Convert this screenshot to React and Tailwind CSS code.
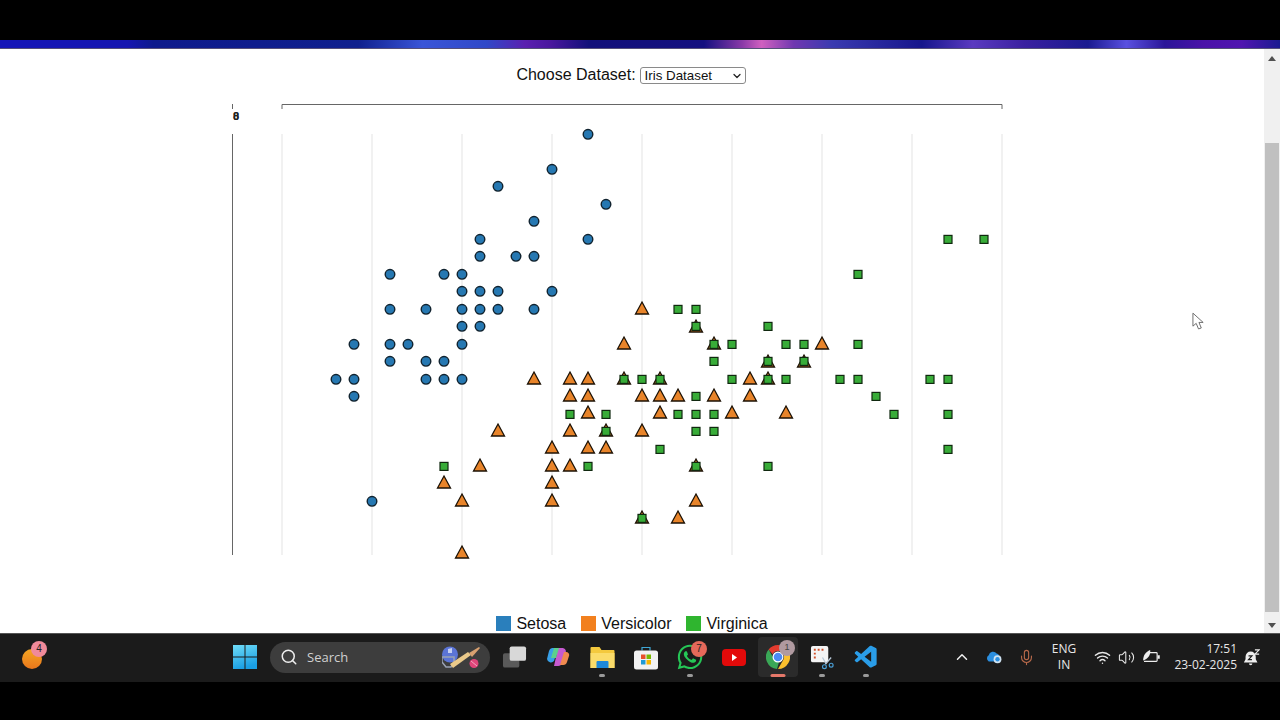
import React from 'react';
import { Search, ChevronUp, ChevronDown, Mic, Wifi, Volume2 } from 'lucide-react';
import { FaWhatsapp } from 'react-icons/fa';
import { VscVscode } from 'react-icons/vsc';

const gridX = [282, 372, 462, 552, 642, 732, 822, 912, 1002];

const setosa = [
  [588, 134], [552, 169], [498, 186], [606, 204], [534, 221], [480, 239], [588, 239], [480, 256], [516, 256], [534, 256],
  [390, 274], [444, 274], [462, 274], [462, 291], [480, 291], [498, 291], [552, 291], [390, 309], [426, 309], [462, 309],
  [480, 309], [498, 309], [534, 309], [462, 326], [480, 326], [354, 344], [390, 344], [408, 344], [462, 344], [390, 361],
  [426, 361], [444, 361], [336, 379], [354, 379], [426, 379], [444, 379], [462, 379], [354, 396], [372, 501],
];

const versicolor = [
  [642, 308], [696, 326], [624, 343], [714, 343], [822, 343], [768, 361], [804, 361], [534, 378], [570, 378], [588, 378],
  [624, 378], [660, 378], [750, 378], [768, 378], [570, 395], [588, 395], [642, 395], [660, 395], [678, 395], [714, 395],
  [750, 395], [588, 412], [660, 412], [732, 412], [786, 412], [498, 430], [570, 430], [606, 430], [642, 430], [552, 447],
  [588, 447], [606, 447], [480, 465], [552, 465], [570, 465], [696, 465], [444, 482], [552, 482], [462, 500], [552, 500],
  [696, 500], [642, 517], [678, 517], [462, 552],
];

const virginica = [
  [948, 239], [984, 239], [858, 274], [678, 309], [696, 309], [696, 326], [768, 326], [714, 344], [732, 344], [786, 344],
  [804, 344], [858, 344], [714, 361], [768, 361], [804, 361], [624, 379], [642, 379], [660, 379], [732, 379], [768, 379],
  [786, 379], [840, 379], [858, 379], [930, 379], [948, 379], [696, 396], [876, 396], [570, 414], [606, 414], [678, 414],
  [696, 414], [714, 414], [894, 414], [948, 414], [606, 431], [696, 431], [714, 431], [660, 449], [948, 449], [444, 466],
  [588, 466], [696, 466], [768, 466], [642, 518],
];

function Chart() {
  return (
    <svg viewBox="0 100 1264 465" className="block w-[1264px] h-[465px] mt-[16px] shrink-0">
      {gridX.map((x) => (
        <line key={x} x1={x} x2={x} y1="134" y2="555" stroke="#ececec" strokeWidth="1.5" />
      ))}
      <path d="M282 109V104.500H1002V109" fill="none" stroke="#666" />
      <path d="M232.500 104V109M232.500 134V555" fill="none" stroke="#666" />
      <text x="233" y="120" fontSize="11" fontWeight="700" fill="#222" fontFamily="Liberation Sans">0</text>
      <text x="233" y="120" fontSize="11" fontWeight="700" fill="#222" fontFamily="Liberation Sans">8</text>
      {setosa.map(([x, y]) => (
        <circle key={`${x}-${y}`} cx={x} cy={y + 0.3} r="4.800" fill="#2678b2" stroke="#10222e" strokeWidth="1.400" />
      ))}
      {versicolor.map(([x, y]) => (
        <polygon key={`${x}-${y}`} points={`${x},${y - 6} ${x + 6.5},${y + 6} ${x - 6.5},${y + 6}`} fill="#e8842a" stroke="#1c1206" strokeWidth="1.300" />
      ))}
      {virginica.map(([x, y]) => (
        <rect key={`${x}-${y}`} x={x - 4} y={y - 3.6} width="8" height="8" fill="#38ac38" stroke="#10280f" strokeWidth="1.200" />
      ))}
    </svg>
  );
}

function LegendItem({ color, label }) {
  return (
    <div className="flex items-center gap-[5px]">
      <span className={`w-[15px] h-[15px] mb-[2px] ${color}`} />
      <span className="text-[16px] leading-[18px] text-[#111]">{label}</span>
    </div>
  );
}

function Scrollbar() {
  return (
    <div className="w-4 shrink-0 bg-[#f0f0f0] flex flex-col items-center">
      <div className="h-[16px] mt-[1px] flex items-center justify-center">
        <span className="w-0 h-0 border-x-[4px] border-x-transparent border-b-[5px] border-b-[#505050]" />
      </div>
      <div className="w-[14px] h-[469px] mt-[77px] bg-[#c0c0c0]" />
      <div className="h-[16px] mt-[5px] flex items-center justify-center">
        <span className="w-0 h-0 border-x-[4px] border-x-transparent border-t-[5px] border-t-[#505050]" />
      </div>
    </div>
  );
}

function Badge({ n, className }) {
  return (
    <span className={`absolute flex items-center justify-center rounded-full text-[10px] leading-none text-[#222] ${className}`}>{n}</span>
  );
}

function TaskIcon({ children, dot }) {
  return (
    <div className="relative w-[44px] h-[44px] flex items-center justify-center">
      {children}
      {dot && <span className="absolute left-1/2 -translate-x-1/2 top-[39px] w-[6px] h-[3px] rounded-full bg-[#9a9a9a]" />}
    </div>
  );
}

function Taskbar() {
  return (
    <div className="h-[49px] pb-[2px] bg-[#1b1b1b] border-t border-[#555] flex items-center text-[#e8e8e8] shrink-0">
      <div className="relative w-[270px] h-full shrink-0 flex items-center">
        <span className="ml-[22px] mt-[3px] w-[20px] h-[20px] rounded-full bg-gradient-to-b from-[#f5a623] to-[#e8761c]" />
        <Badge n="4" className="left-[31px] top-[7px] w-[16px] h-[16px] bg-[#f08a9a]" />
        <svg viewBox="0 0 24 24" className="absolute left-[233px] top-[11px] w-[24px] h-[24px]">
          <defs>
            <linearGradient id="winBlue" x1="0" y1="0" x2="0.3" y2="1">
              <stop offset="0" stopColor="#6fdcf7" />
              <stop offset="1" stopColor="#1a9fe4" />
            </linearGradient>
          </defs>
          <path d="M0 0h11.500v11.500H0zM12.500 0H24v11.500H12.500zM0 12.500h11.500V24H0zM12.500 12.500H24V24H12.500z" fill="url(#winBlue)" />
        </svg>
      </div>
      <div className="relative w-[220px] h-[31px] rounded-full bg-[#3d3d3d] flex items-center pl-[10px] shrink-0">
        <Search size={18} strokeWidth={2} className="text-[#eee]" />
        <span className="ml-[9px] mt-[1px] text-[13px] text-[#d0d0d0] font-['Open_Sans',sans-serif]">Search</span>
        <svg viewBox="0 0 40 26" className="absolute right-[8px] top-[3px] w-[40px] h-[26px]">
          <circle cx="8" cy="9.500" r="8" fill="#5b74d6" />
          <path d="M6 4l4-1v5H6z" fill="#c6d0f2" />
          <path d="M0 12h12v5l-3 5H4l-4-5z" fill="none" stroke="#9aa2b4" strokeWidth="1.500" />
          <path d="M11 23l-3-4L26 7l3 3z" fill="#eac98a" />
          <path d="M27 8l10-6 1 1-8 9z" fill="#d8a070" />
          <circle cx="32" cy="18.500" r="4.500" fill="#e0457a" />
          <path d="M29 16l6 5" stroke="#f4c0d0" strokeWidth="0.800" />
        </svg>
      </div>
      <div className="flex items-center ml-[2px] shrink-0">
        <TaskIcon>
          <svg viewBox="0 0 26 24" className="w-[25px] h-[24px]">
            <rect x="1" y="8" width="17" height="15" rx="2" fill="#5a5a5a" />
            <rect x="8" y="1" width="17" height="15" rx="2" fill="#d8d8d8" />
          </svg>
        </TaskIcon>
        <TaskIcon>
          <svg viewBox="0 0 24 24" className="w-[24px] h-[24px]">
            <path d="M6 3h6l-4 13a4 4 0 0 1-7-2l2-8a4 4 0 0 1 3-3z" fill="#38a0e8" />
            <path d="M12 3h5a4 4 0 0 1 3 3l-4 12a4 4 0 0 1-4 3H8z" fill="#c65ad0" />
            <path d="M18 7h2a3 3 0 0 1 3 4l-2 6a4 4 0 0 1-4 3h-3z" fill="#f08a50" />
            <path d="M8 3h5l-3 10H5z" fill="#5cd08c" />
          </svg>
        </TaskIcon>
        <TaskIcon dot>
          <svg viewBox="0 0 24 24" className="w-[25px] h-[24px]">
            <path d="M0 3a1 1 0 0 1 1-1h8l2 3h12a1 1 0 0 1 1 1v17H0z" fill="#f4c93e" />
            <path d="M0 8h24v15H0z" fill="#fbdc6a" />
            <path d="M7 16h10a1 1 0 0 1 1 1v6H6v-6a1 1 0 0 1 1-1z" fill="#1e88d8" />
          </svg>
        </TaskIcon>
        <TaskIcon>
          <svg viewBox="0 0 24 24" className="w-[24px] h-[25px]">
            <path d="M8 5V2h8v3" fill="none" stroke="#3fa7d6" strokeWidth="1.200" />
            <rect x="0" y="5" width="24" height="19" rx="2.500" fill="#f2f2f2" />
            <rect x="7" y="9" width="4.500" height="4.500" fill="#e8502a" />
            <rect x="12.500" y="9" width="4.500" height="4.500" fill="#7ab800" />
            <rect x="7" y="14.500" width="4.500" height="4.500" fill="#1e9ad6" />
            <rect x="12.500" y="14.500" width="4.500" height="4.500" fill="#f7b500" />
          </svg>
        </TaskIcon>
        <TaskIcon dot>
          <FaWhatsapp size={28} className="text-[#25c656]" />
          <Badge n="7" className="left-[23px] top-[6px] w-[16px] h-[16px] bg-[#e5695a]" />
        </TaskIcon>
        <TaskIcon>
          <svg viewBox="0 0 24 17" className="w-[24px] h-[17px]">
            <rect width="24" height="17" rx="4" fill="#e30a0a" />
            <path d="M10 5l5 3.500-5 3.500z" fill="#fff" />
          </svg>
        </TaskIcon>
        <div className="relative w-[40px] h-[40px] mx-[2px] rounded-[4px] bg-[#2b2b2b] flex items-center justify-center">
          <svg viewBox="0 0 24 24" className="w-[24px] h-[24px]">
            <path d="M12 0a12 12 0 0 1 10.400 6H12a6 6 0 0 0-5.300 3.200L2.600 4.500A12 12 0 0 1 12 0z" fill="#e33b2e" />
            <path d="M22.400 6A12 12 0 0 1 12 24l5.200-9a6 6 0 0 0 0-6z" fill="#fbc02d" />
            <path d="M2.600 4.500L8 14a5 5 0 0 0 5 3l-2 7A12 12 0 0 1 2.600 4.500z" fill="#3aa757" />
            <circle cx="12" cy="12" r="5.500" fill="#fff" />
            <circle cx="12" cy="12" r="4.300" fill="#4a8af4" />
          </svg>
          <span className="absolute left-[21px] top-[3px] w-[16px] h-[16px] rounded-full bg-[#b09aa0] flex items-center justify-center text-[9px] text-[#444]">1</span>
          <span className="absolute left-1/2 -translate-x-1/2 top-[37px] w-[15px] h-[3px] rounded-full bg-[#e5786a]" />
        </div>
        <TaskIcon dot>
          <svg viewBox="0 0 26 26" className="w-[25px] h-[25px]">
            <rect x="1" y="1" width="18" height="17" rx="2" fill="#f4f4f4" />
            <path d="M4 4h2v2H4zM8 4h2v2H8zM12 4h2v2h-2zM4 8h2v2H4zM4 12h2v2H4z" fill="#d0502a" />
            <path d="M13 13l4 7M22 13l-6 7" stroke="#b8c8d8" strokeWidth="1.300" />
            <circle cx="15" cy="22.500" r="2" fill="none" stroke="#4aa0d8" strokeWidth="1.200" />
            <circle cx="22" cy="21" r="2" fill="none" stroke="#4aa0d8" strokeWidth="1.200" />
          </svg>
        </TaskIcon>
        <TaskIcon dot>
          <VscVscode size={27} className="text-[#2a9de8]" />
        </TaskIcon>
      </div>
      <div className="flex items-center ml-auto h-full shrink-0">
        <ChevronUp size={18} strokeWidth={2} className="text-[#eee]" />
        <svg viewBox="0 0 20 16" className="w-[18px] h-[14px] ml-[14px]">
          <path d="M4 13a4 4 0 0 1 0-7 5 5 0 0 1 9-2 4 4 0 0 1 3 5v4z" fill="#2b8fe0" />
          <circle cx="14" cy="10.500" r="4.500" fill="#cfe3f2" />
          <circle cx="14" cy="10.500" r="2.500" fill="#2b8fe0" />
        </svg>
        <Mic size={17} strokeWidth={1.600} className="text-[#b5684a] ml-[15px]" />
        <div className="w-[38px] ml-[10px] text-center text-[12px] leading-[16px] font-['Open_Sans',sans-serif]">ENG<br />IN</div>
        <Wifi size={17} className="ml-[11px]" />
        <Volume2 size={17} strokeWidth={1.500} className="ml-[7px]" />
        <svg viewBox="0 0 20 16" className="w-[18px] h-[14px] ml-[7px]">
          <path d="M7 3h9a1 1 0 0 1 1 1v8a1 1 0 0 1-1 1H2" fill="none" stroke="#eee" strokeWidth="1.300" />
          <path d="M17.500 6H20v4h-2.500z" fill="#eee" />
          <path d="M1 12C1 6 4 2 9 0c1 5-2 10-8 12z" fill="#eee" />
        </svg>
        <div className="w-[70px] ml-[7px] text-right text-[12px] leading-[16px] font-['Open_Sans',sans-serif]">17:51<br />23-02-2025</div>
        <svg viewBox="0 0 20 20" className="w-[17px] h-[17px] ml-[6px] mr-[20px]">
          <path d="M9 3a6 6 0 0 0-6 6v3l-2 4h16l-2-4V9a6 6 0 0 0-6-6z" fill="#eee" />
          <path d="M7 17a2 2 0 0 0 4 0z" fill="#eee" />
          <path d="M6.500 8h4l-4 4.500h4" fill="none" stroke="#1b1b1b" strokeWidth="1.400" />
          <path d="M14 1h5l-5 5h5" fill="none" stroke="#eee" strokeWidth="1.300" />
        </svg>
      </div>
    </div>
  );
}

export default function App() {
  return (
    <div className="relative w-[1280px] h-[720px] bg-black overflow-hidden flex flex-col font-['Liberation_Sans',Arial,sans-serif]">
      <div className="h-[40px] shrink-0" />
      <div className="h-[9px] shrink-0 bg-[linear-gradient(90deg,#1616b8_0%,#1616b0_10%,#0e1a8c_12%,#10208e_28%,#3a55d8_33%,#3048c8_38%,#5a20b0_41%,#4a189e_43%,#12107a_46%,#141080_55%,#8a3aa8_58%,#d060c0_59.500%,#7038b0_62%,#3a3ab0_65%,#16168c_72%,#5a3ac0_76%,#3a20a0_80%,#1a1a90_85%,#5a50e0_88%,#2a1698_91%,#4a12a8_94%,#5015b0_97%,#1a1a90_100%)] border-b border-[#55507a]" />
      <div className="h-[584px] shrink-0 flex bg-white overflow-hidden">
        <div className="flex-1 flex flex-col items-center overflow-hidden">
          <div className="flex items-center justify-center gap-[4px] mt-[18px] h-[17px] ml-[-2px]">
            <label className="text-[16px] mb-[2px] text-[#111]">Choose Dataset:</label>
            <div className="relative w-[106px] h-[17px]">
              <select className="block w-full h-full appearance-none text-[13.33px] leading-[15px] text-[#111] bg-white border border-[#8a8a8a] rounded-[3px] pl-[4px]" defaultValue="iris">
                <option value="iris">Iris Dataset</option>
              </select>
              <ChevronDown size={12} strokeWidth={2.500} className="absolute right-[3px] top-[3px] text-[#222]" />
            </div>
          </div>
          <Chart />
          <div className="flex items-center gap-[15px] mt-[50px]">
            <LegendItem color="bg-[#2a7fbc]" label="Setosa" />
            <LegendItem color="bg-[#f2801e]" label="Versicolor" />
            <LegendItem color="bg-[#2fb52f]" label="Virginica" />
          </div>
        </div>
        <Scrollbar />
      </div>
      <Taskbar />
      <svg viewBox="0 0 14 20" className="absolute left-[1192px] top-[312px] w-[13px] h-[19px]">
        <path d="M1 1v14l3.500-3 2.500 6 3-1-2.500-6H12z" fill="#fff" stroke="#666" strokeWidth="1" />
      </svg>
    </div>
  );
}
